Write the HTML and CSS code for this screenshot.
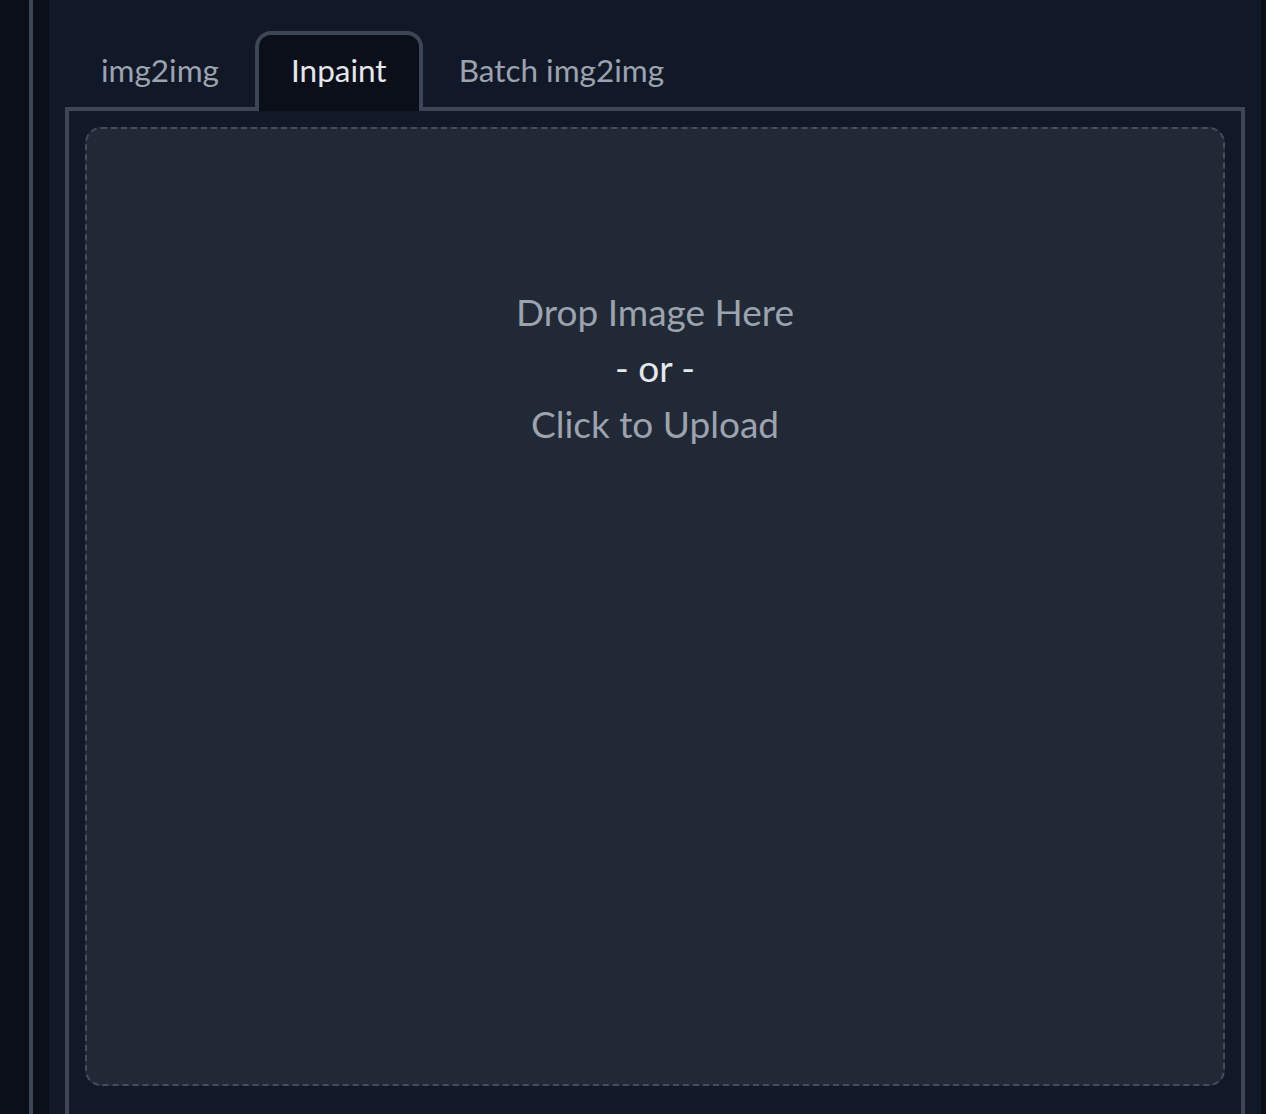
FILE: index.html
```html
<!DOCTYPE html>
<html>
<head>
<meta charset="utf-8">
<link rel="stylesheet" href="styles.css">
</head>
<body>
<div class="app">
  <div class="strip"></div>
  <div class="main">
    <div class="tabs">
      <button class="tab">img2img</button>
      <button class="tab active">Inpaint</button>
      <button class="tab">Batch img2img</button>
    </div>
    <div class="panel">
      <div class="drop">
        <div class="drop-text">
          <div class="line muted">Drop Image Here</div>
          <div class="line light">- or -</div>
          <div class="line muted">Click to Upload</div>
        </div>
      </div>
    </div>
  </div>
</div>
</body>
</html>
```
FILE: styles.css
```css
html, body {
  margin: 0;
  padding: 0;
  background: #0b0f19;
  height: 1114px;
  overflow: hidden;
  font-family: "Lato", "Noto Sans", sans-serif;
}
.app {
  margin-left: 29px;
  width: 1232px;
  height: 1114px;
  display: flex;
  border-left: 4px solid #3d4557;
  box-sizing: border-box;
}
.strip {
  width: 16px;
  flex: none;
  background: #0b0f19;
}
.main {
  flex: 1;
  background: #111827;
  padding: 31px 16px 0 16px;
  display: flex;
  flex-direction: column;
}
.tabs {
  display: flex;
  position: relative;
  z-index: 1;
}
.tab {
  font-family: inherit;
  font-size: 31.5px;
  color: #9ca3af;
  background: transparent;
  border: 4px solid transparent;
  border-bottom: none;
  border-radius: 16px 16px 0 0;
  height: 80px;
  padding: 0 32px 6px 32px;
  margin-bottom: -4px;
  cursor: pointer;
}
.tab.active {
  background: #0b0f19;
  border-color: #3d4557;
  color: #e5e7eb;
}
.panel {
  flex: 1;
  border: 4px solid #3d4557;
  border-bottom: none;
  padding: 16px 16px 0 16px;
}
.drop {
  height: 959px;
  box-sizing: border-box;
  background: #212936;
  border: 2px dashed #454d5e;
  border-radius: 16px;
  display: flex;
  justify-content: center;
  padding-top: 155px;
}
.drop-text {
  text-align: center;
  font-size: 37px;
  line-height: 56px;
}
.muted { color: #9ca3af; }
.light { color: #e5e7eb; }
```
